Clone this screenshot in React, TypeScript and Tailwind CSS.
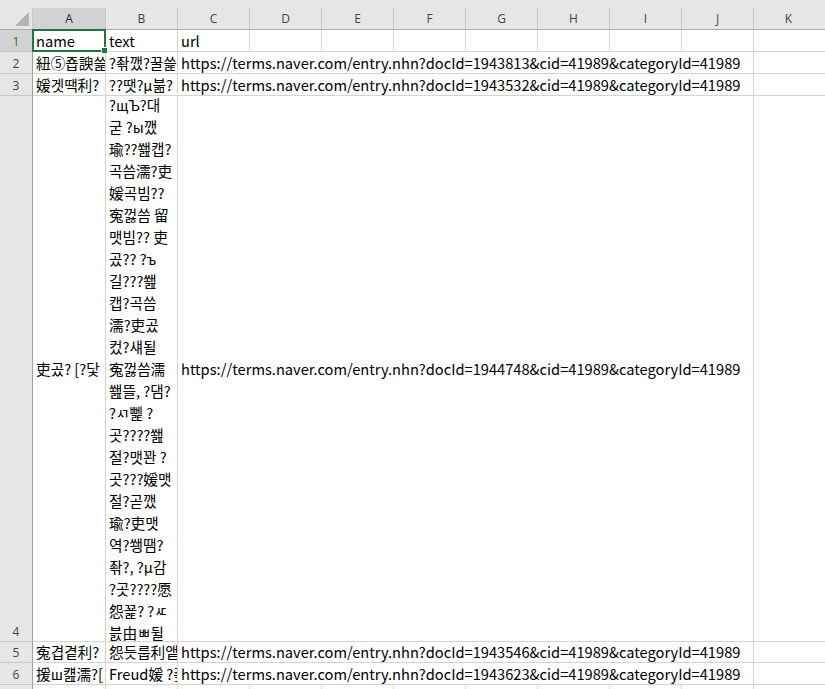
import React from 'react';

const COLS = ['A', 'B', 'C', 'D', 'E', 'F', 'G', 'H', 'I', 'J'];
const WIDTHS: Record<string, string> = {
  A: 'w-[73px]',
  B: 'w-[72px]',
};

// wrapped lines of the tall B4 cell (clipped top and bottom by the row)
const B4_LINES = [
  '?щЪ?대',
  '굳 ?ы깼',
  '瑜??쐞캡?',
  '곡씀濡?吏',
  '媛곡빔??',
  '寃껋씀 留',
  '맷빔?? 吏',
  '곴?? ?ъ',
  '길???쐞',
  '캡?곡씀',
  '濡?吏곴',
  '컸?섀될',
  '寃껋씀濡',
  '쐞뜰, ?댐?',
  '?ㅺ뻹 ?',
  '곳????쐞',
  '절?맷꽌 ?',
  '곳???媛맷',
  '절?곧깼',
  '瑜?吏맷',
  '역?쐥땜?',
  '좎?, ?μ감',
  '?곳????愿',
  '怨꾩? ?ㅼ',
  '븘由ㅃ뒬',
];

const ROWS = [
  { n: 2, h: 'h-[22px]', a: '紐⑤죱諛쓽?꾩', b: '?좎깼?꿀쓽 ?', url: 'https://terms.naver.com/entry.nhn?docId=1943813&cid=41989&categoryId=41989' },
  { n: 3, h: 'h-[22px]', a: '媛겟땍利?', b: '??땟?μ붊?', url: 'https://terms.naver.com/entry.nhn?docId=1943532&cid=41989&categoryId=41989' },
  { n: 4, h: 'h-[546px]', a: '吏곴? [?닻', b: null, url: 'https://terms.naver.com/entry.nhn?docId=1944748&cid=41989&categoryId=41989' },
  { n: 5, h: 'h-[21px]', a: '寃겹곁利?', b: '怨듯룹利앹', url: 'https://terms.naver.com/entry.nhn?docId=1943546&cid=41989&categoryId=41989' },
  { n: 6, h: 'h-[22px]', a: '援ш컖濡?[', b: 'Freud媛 ?좊', url: 'https://terms.naver.com/entry.nhn?docId=1943623&cid=41989&categoryId=41989' },
];

function RowHead({ n, active }: { n: number; active?: boolean }) {
  return (
    <div
      className={`w-[33px] shrink-0 flex items-end justify-center border-r border-b border-r-[#a0a0a0] border-b-[#c8c8c8] font-['Open_Sans',sans-serif] text-[12px] leading-[18px] ${
        active ? 'bg-[#d2d2d2] text-[#217346]' : 'bg-[#e6e6e6] text-[#444]'
      }`}
    >
      {n}
    </div>
  );
}

export default function App() {
  return (
    <div className="w-[825px] h-[689px] overflow-hidden bg-white font-['Noto_Sans_CJK_KR',sans-serif] text-[14.67px] text-black">
      {/* column headers */}
      <div className="h-[30px] flex items-end bg-[#e6e6e6] border-b border-[#ababab]">
        <div className="w-[33px] h-[21px] shrink-0 relative border-r border-[#c8c8c8]">
          <div className="absolute right-[3px] bottom-[3px] w-0 h-0 border-l-[14px] border-l-transparent border-b-[14px] border-b-[#b4b4b4]" />
        </div>
        {COLS.map((c) => (
          <div
            key={c}
            className={`${WIDTHS[c] ?? 'w-[72px]'} h-[21px] shrink-0 flex items-center justify-center border-r border-[#c8c8c8] font-['Open_Sans',sans-serif] text-[12px] ${
              c === 'A' ? 'bg-[#d2d2d2] text-[#262626]' : 'text-[#444]'
            }`}
          >
            {c}
          </div>
        ))}
        <div className="flex-1 h-[21px] flex items-center justify-center pr-[2px] font-['Open_Sans',sans-serif] text-[12px] text-[#444]">K</div>
      </div>

      {/* row 1 */}
      <div className="flex h-[22px]">
        <RowHead n={1} active />
        {COLS.map((c) => (
          <div
            key={c}
            className={`${WIDTHS[c] ?? 'w-[72px]'} shrink-0 relative flex items-center px-[3px] border-r border-b border-[#d4d4d4] whitespace-nowrap ${
              c === 'A' ? 'z-10' : ''
            }`}
          >
            {c === 'A' && 'name'}
            {c === 'B' && 'text'}
            {c === 'C' && 'url'}
            {c === 'A' && (
              <div className="absolute -left-[1px] -top-[1px] -right-[1px] -bottom-[1px] border-2 border-[#217346]">
                <div className="absolute -right-[4px] -bottom-[4px] w-[7px] h-[7px] bg-[#217346] border border-white" />
              </div>
            )}
          </div>
        ))}
        <div className="flex-1 border-b border-[#d4d4d4]" />
      </div>

      {ROWS.map((r) => (
        <div key={r.n} className={`flex ${r.h}`}>
          <RowHead n={r.n} />
          <div className="w-[73px] shrink-0 flex items-center px-[3px] border-r border-b border-[#d4d4d4] overflow-hidden whitespace-nowrap">
            {r.a}
          </div>
          <div className="w-[72px] shrink-0 flex items-center px-[3px] border-r border-b border-[#d4d4d4] overflow-hidden whitespace-nowrap">
            {r.b !== null ? (
              r.b
            ) : (
              <div className="flex flex-col leading-[22px]">
                {B4_LINES.map((l, i) => (
                  <div key={i} className="whitespace-nowrap">
                    {l}
                  </div>
                ))}
              </div>
            )}
          </div>
          <div className="w-[576px] shrink-0 flex items-center px-[3px] border-r border-b border-[#d4d4d4] overflow-hidden whitespace-nowrap">
            {r.url}
          </div>
          <div className="flex-1 border-b border-[#d4d4d4]" />
        </div>
      ))}

      {/* row 7 (partly visible) */}
      <div className="flex h-[22px]">
        <RowHead n={7} />
        {COLS.map((c) => (
          <div key={c} className={`${WIDTHS[c] ?? 'w-[72px]'} shrink-0 border-r border-b border-[#d4d4d4]`} />
        ))}
        <div className="flex-1 border-b border-[#d4d4d4]" />
      </div>
    </div>
  );
}
